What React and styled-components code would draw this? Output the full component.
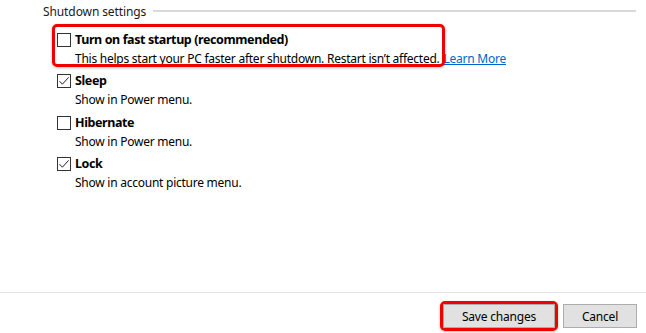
import React from "react";
import styled, { createGlobalStyle } from "styled-components";

const GlobalStyle = createGlobalStyle`
  html, body {
    margin: 0;
    padding: 0;
    background: #ffffff;
  }
  body {
    font-family: "Noto Sans", "Open Sans", sans-serif;
    color: #000000;
  }
`;

const options = [
  {
    id: "fast",
    title: "Turn on fast startup (recommended)",
    desc: "This helps start your PC faster after shutdown. Restart isn\u2019t affected.",
    link: "Learn More",
    checked: false,
    highlight: true,
  },
  { id: "sleep", title: "Sleep", desc: "Show in Power menu.", checked: true },
  { id: "hibernate", title: "Hibernate", desc: "Show in Power menu.", checked: false },
  { id: "lock", title: "Lock", desc: "Show in account picture menu.", checked: true },
];

export default function App() {
  return (
    <Page>
      <GlobalStyle />
      <Content>
        <Legend>
          <LegendText>Shutdown settings</LegendText>
          <Rule />
        </Legend>
        <List>
          {options.map((o) => (
            <Row key={o.id}>
              {o.highlight && <RowFrame />}
              <Box>
                {o.checked && (
                  <svg width="12" height="12" viewBox="0 0 12 12">
                    <path d="M1.5 6.2 L4.4 9.2 L10.6 2.4" fill="none" stroke="#222" strokeWidth="1" />
                  </svg>
                )}
              </Box>
              <Text>
                <Title>{o.title}</Title>
                <Desc>
                  {o.desc}
                  {o.link && <Link href="#">{o.link}</Link>}
                </Desc>
              </Text>
            </Row>
          ))}
        </List>
      </Content>
      <Footer>
        <SaveFrame>
          <Button>Save changes</Button>
        </SaveFrame>
        <Button $wide>Cancel</Button>
      </Footer>
    </Page>
  );
}

const Page = styled.div`
  width: 646px;
  height: 333px;
  display: flex;
  flex-direction: column;
  overflow: hidden;
`;

const Content = styled.div`
  flex: 1;
  padding: 2px 10px 0 43px;
`;

const Legend = styled.div`
  display: flex;
  align-items: center;
  gap: 7px;
  height: 18px;
`;

const LegendText = styled.span`
  font-size: 12px;
  letter-spacing: -0.1px;
  color: #1a1a1a;
  white-space: nowrap;
`;

const Rule = styled.div`
  flex: 1;
  height: 2px;
  background: #d9d9d9;
`;

const List = styled.div`
  display: flex;
  flex-direction: column;
  gap: 6.4px;
  padding: 13px 0 0 14px;
`;

const Row = styled.div`
  position: relative;
  display: flex;
  align-items: flex-start;
  gap: 4px;
`;

const RowFrame = styled.div`
  position: absolute;
  left: -5px;
  top: -9px;
  width: 387px;
  height: 37px;
  border: 3px solid #f00000;
  border-radius: 5px;
  box-shadow: 0 1px 3px rgba(0, 0, 0, 0.25);
  pointer-events: none;
`;

const Box = styled.div`
  width: 12px;
  height: 12px;
  border: 1px solid #333333;
  display: flex;
  align-items: center;
  justify-content: center;
  flex-shrink: 0;
`;

const Text = styled.div`
  display: flex;
  flex-direction: column;
`;

const Title = styled.div`
  font-size: 12.5px;
  font-weight: 700;
  letter-spacing: -0.4px;
  line-height: 14px;
`;

const Desc = styled.div`
  font-size: 12px;
  letter-spacing: -0.25px;
  line-height: 19px;
  margin-top: 2px;
  color: #000;
  white-space: nowrap;
`;

const Link = styled.a`
  color: #0066cc;
  text-decoration: underline;
  margin-left: 4px;
`;

const Footer = styled.div`
  height: 41px;
  border-top: 1px solid #e3e3e3;
  display: flex;
  align-items: center;
  justify-content: flex-end;
  gap: 5px;
  padding: 6px 9px 0 0;
  box-sizing: border-box;
`;

const SaveFrame = styled.div`
  border: 3px solid #f00000;
  border-radius: 5px;
  box-shadow: 0 1px 3px rgba(0, 0, 0, 0.25);
  display: flex;
`;

const Button = styled.button`
  font-family: "Noto Sans", "Open Sans", sans-serif;
  font-size: 12px;
  letter-spacing: -0.2px;
  color: #000;
  background: #e1e1e1;
  border: 1px solid #adadad;
  height: 24px;
  width: ${(p) => (p.$wide ? "74px" : "112px")};
  padding: 0;
  margin: 0;
`;
